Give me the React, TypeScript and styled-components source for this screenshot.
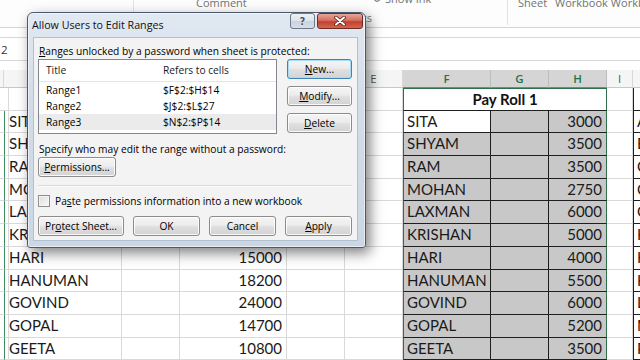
import React from "react";
import styled, { createGlobalStyle } from "styled-components";

const GlobalStyle = createGlobalStyle`
  html, body {
    margin: 0;
    padding: 0;
    background: #ffffff;
  }
  body {
    width: 640px;
    height: 360px;
    overflow: hidden;
    font-family: "Open Sans", "Noto Sans", sans-serif;
  }
`;

const ROW_H = 22.7;
const COLS = "4px 118px 58px 107px 58px 58px 88px 58px 58px 26px 80px";
const EDGE = "#2f6f4b";
const DARK = "#1e1e1e";
const GRID = "#d9d9d9";

const Page = styled.div`
  position: relative;
  width: 640px;
  height: 360px;
  overflow: hidden;
  background: #fff;
`;

/* ---------- ribbon ---------- */

const Ribbon = styled.div`
  display: flex;
  height: 27px;
  border-bottom: 1px solid #d5d5d5;
  background: #fdfdfd;
  overflow: hidden;
`;

const RibbonGroup = styled.div<{ $w?: number }>`
  box-sizing: border-box;
  width: ${(p) => (p.$w ? `${p.$w}px` : "auto")};
  flex: ${(p) => (p.$w ? "none" : 1)};
  height: 25px;
  display: flex;
  flex-direction: column;
  justify-content: space-between;
  border-right: ${(p) => (p.$w ? "1px solid #e3e3e3" : "none")};
`;

const RibbonItems = styled.div<{ $cols?: string }>`
  display: grid;
  grid-template-columns: ${(p) => p.$cols || "auto"};
  justify-content: start;
  align-items: start;
`;

const RibbonText = styled.span<{ $lift?: number; $gap?: number }>`
  display: inline-flex;
  align-items: center;
  gap: 3px;
  margin-top: ${(p) => -(p.$lift ?? 4)}px;
  margin-left: ${(p) => p.$gap ?? 0}px;
  font-size: 11px;
  line-height: 14px;
  color: #727272;
  white-space: nowrap;
`;

const GroupFooter = styled.div<{ $right: number }>`
  text-align: right;
  padding-right: ${(p) => p.$right}px;
  font-size: 11px;
  line-height: 14px;
  color: #7a7a7a;
  white-space: nowrap;
`;

const FormulaBar = styled.div`
  margin-top: 9px;
  height: 22px;
  border-top: 1px solid #d8d8d8;
  border-bottom: 1px solid #d8d8d8;
  display: flex;
  align-items: center;
`;

const NameBox = styled.span`
  padding-left: 1px;
  font-size: 11.5px;
  color: #333;
`;

/* ---------- sheet ---------- */

const Sheet = styled.div`
  display: grid;
  grid-template-columns: ${COLS};
  grid-template-rows: 18px repeat(12, ${ROW_H}px);
  margin-top: 9px;
`;

const ColHead = styled.div<{ $sel?: boolean }>`
  box-sizing: border-box;
  display: flex;
  align-items: center;
  justify-content: center;
  background: ${(p) => (p.$sel ? "#d5d5d5" : "#f5f5f5")};
  border-right: 1px solid ${(p) => (p.$sel ? "#bcbcbc" : "#d8d8d8")};
  border-bottom: 1px solid ${(p) => (p.$sel ? "#6f8f7c" : "#c8c8c8")};
  color: ${(p) => (p.$sel ? "#217346" : "#555")};
  font-size: 11.5px;
  font-weight: ${(p) => (p.$sel ? 600 : 400)};
`;

const GridCell = styled.div<{ $right?: boolean; $edge?: boolean }>`
  box-sizing: border-box;
  border-right: 1px solid ${GRID};
  border-bottom: 1px solid ${GRID};
  border-left: ${(p) => (p.$edge ? `1px solid #3c8a5d` : "none")};
  padding: 0 4px;
  font-family: Lato, "Open Sans", sans-serif;
  font-size: 15px;
  line-height: ${ROW_H - 1}px;
  color: #1a1a1a;
  text-align: ${(p) => (p.$right ? "right" : "left")};
  white-space: nowrap;
  overflow: hidden;
`;

const PayCell = styled.div<{ $pos: "first" | "mid" | "last"; $active?: boolean }>`
  box-sizing: border-box;
  background: ${(p) => (p.$active ? "#ffffff" : "#c8c8c8")};
  border-right: 1px solid ${(p) => (p.$pos === "last" ? EDGE : DARK)};
  border-bottom: 1px solid ${DARK};
  border-left: ${(p) => (p.$pos === "first" ? `1px solid ${EDGE}` : "none")};
  padding: 0 4px 0 3px;
  font-family: Lato, "Open Sans", sans-serif;
  font-size: 15px;
  line-height: ${ROW_H - 1}px;
  color: #1a1a1a;
  text-align: ${(p) => (p.$pos === "last" ? "right" : "left")};
  white-space: nowrap;
  overflow: hidden;
`;

const TitleCell = styled.div`
  grid-column: span 3;
  box-sizing: border-box;
  background: #fff;
  border: 1px solid ${EDGE};
  border-bottom-color: ${DARK};
  font-family: Lato, "Open Sans", sans-serif;
  font-size: 15px;
  font-weight: 700;
  line-height: ${ROW_H - 2}px;
  color: #111;
  text-align: center;
`;

const JCell = styled.div`
  box-sizing: border-box;
  border-left: 1px solid ${DARK};
  border-bottom: 1px solid ${DARK};
  padding-left: 3px;
  font-family: Lato, "Open Sans", sans-serif;
  font-size: 15px;
  line-height: ${ROW_H - 1}px;
  color: #1a1a1a;
  white-space: nowrap;
  overflow: hidden;
`;

/* ---------- dialog ---------- */

const Dialog = styled.div`
  position: absolute;
  left: 27px;
  top: 12px;
  width: 339px;
  height: 236px;
  box-sizing: border-box;
  display: flex;
  flex-direction: column;
  border: 1px solid #4b596c;
  border-radius: 6px 6px 3px 3px;
  background: linear-gradient(#e1e9f2, #d3dde9 35%, #cbd7e4);
  box-shadow: 4px 5px 13px rgba(0, 0, 0, 0.5),
    inset 0 0 0 1px rgba(255, 255, 255, 0.55);
  font-family: "Open Sans", "Noto Sans", sans-serif;
  font-size: 10.2px;
  color: #000;
`;

const TitleBar = styled.div`
  height: 24px;
  display: flex;
  align-items: flex-start;
  padding-left: 4px;
`;

const TitleText = styled.div`
  flex: 1;
  align-self: center;
  font-size: 10.7px;
  color: #111;
`;

const Caption = styled.div`
  display: flex;
  gap: 2px;
  margin-right: 2px;
`;

const HelpButton = styled.div`
  box-sizing: border-box;
  width: 25px;
  height: 16px;
  display: flex;
  align-items: center;
  justify-content: center;
  border: 1px solid #6c7a8b;
  border-radius: 3px;
  background: linear-gradient(#eef2f6, #dbe3ec 50%, #c9d4df 51%, #d6dee8);
  font-family: "DejaVu Sans", sans-serif;
  font-weight: 700;
  font-size: 10px;
  color: #4a5563;
  text-shadow: 0 0 1px #fff, 0 0 1px #fff;
`;

const CloseButton = styled.div`
  box-sizing: border-box;
  width: 46px;
  height: 16px;
  display: flex;
  align-items: center;
  justify-content: center;
  border: 1px solid #6e2c24;
  border-radius: 3px;
  background: linear-gradient(#e4a79c, #d6705f 45%, #c2412f 55%, #d2654f);
`;

const Panel = styled.div`
  flex: 1;
  margin: 0 7px 6px 5px;
  border: 1px solid #b3c0cf;
  background: #f3f3f3;
  padding: 5px 5px 0 4px;
  display: flex;
  flex-direction: column;
`;

const Label = styled.div<{ $top?: number }>`
  height: 16px;
  line-height: 16px;
  margin-top: ${(p) => p.$top ?? 0}px;
  padding-left: 1px;
  white-space: nowrap;
`;

const Key = styled.span`
  text-decoration: underline;
  text-underline-offset: 1px;
`;

const ListArea = styled.div`
  display: flex;
  gap: 10px;
`;

const ListBox = styled.div`
  box-sizing: border-box;
  width: 239px;
  height: 75px;
  border: 1px solid #828790;
  background: #fff;
`;

const ListRow = styled.div<{ $head?: boolean; $selected?: boolean }>`
  display: grid;
  grid-template-columns: 117px 1fr;
  height: ${(p) => (p.$head ? 21 : 16)}px;
  line-height: ${(p) => (p.$head ? 21 : 16)}px;
  border-bottom: ${(p) => (p.$head ? "1px solid #e5e5e5" : "none")};
  background: ${(p) => (p.$selected ? "#ebebeb" : "transparent")};
  color: ${(p) => (p.$head ? "#1b1b1b" : "#000")};
  & > span {
    padding-left: 7px;
    white-space: nowrap;
  }
`;

const SideButtons = styled.div`
  display: flex;
  flex-direction: column;
  gap: 7px;
`;

const Button = styled.button<{ $w: number; $focus?: boolean }>`
  box-sizing: border-box;
  width: ${(p) => p.$w}px;
  height: 20px;
  padding: 0;
  margin: 0;
  display: flex;
  align-items: center;
  justify-content: center;
  font: inherit;
  color: #000;
  border: 1px solid ${(p) => (p.$focus ? "#3d85b8" : "#8c8c8c")};
  border-radius: 3px;
  background: linear-gradient(#f5f5f5, #ececec 45%, #dfdfdf 55%, #d3d3d3);
  box-shadow: inset 0 0 0 1px
    ${(p) => (p.$focus ? "#a9dcf5" : "rgba(255, 255, 255, 0.85)")};
`;

const Separator = styled.div`
  margin-top: 8px;
  height: 1px;
  background: #dadada;
  border-bottom: 1px solid #fbfbfb;
`;

const CheckRow = styled.label`
  margin-top: 6px;
  height: 16px;
  display: flex;
  align-items: center;
  gap: 5px;
  white-space: nowrap;
`;

const CheckBox = styled.span`
  box-sizing: border-box;
  width: 12px;
  height: 12px;
  border: 1px solid #8e8f8f;
  background: linear-gradient(135deg, #dcdcdc, #fafafa);
  box-shadow: inset 0 0 0 1px #f4f4f4;
`;

const ButtonRow = styled.div`
  margin-top: 7px;
  display: flex;
  justify-content: space-between;
`;

/* ---------- data ---------- */

const columns = ["", "A", "B", "C", "D", "E", "F", "G", "H", "I", "J"];
const selected = new Set(["F", "G", "H"]);

const leftTable = [
  ["SITA", "12000"],
  ["SHYAM", "14000"],
  ["RAM", "14000"],
  ["MOHAN", "11000"],
  ["LAXMAN", "24000"],
  ["KRISHAN", "20000"],
  ["HARI", "15000"],
  ["HANUMAN", "18200"],
  ["GOVIND", "24000"],
  ["GOPAL", "14700"],
  ["GEETA", "10800"],
];

const payRoll = [
  ["SITA", "3000"],
  ["SHYAM", "3500"],
  ["RAM", "3500"],
  ["MOHAN", "2750"],
  ["LAXMAN", "6000"],
  ["KRISHAN", "5000"],
  ["HARI", "4000"],
  ["HANUMAN", "5500"],
  ["GOVIND", "6000"],
  ["GOPAL", "5200"],
  ["GEETA", "3500"],
];

const nextTable = [
  "AMIT",
  "BHARAT",
  "CHETAN",
  "CHANDU",
  "CHARU",
  "KAMAL",
  "KAPIL",
  "KARAN",
  "LALIT",
  "MOHIT",
  "PANKAJ",
];

const ranges = [
  ["Range1", "$F$2:$H$14"],
  ["Range2", "$J$2:$L$27"],
  ["Range3", "$N$2:$P$14"],
];

function InkIcon() {
  return (
    <svg width="9" height="7" viewBox="0 0 9 7">
      <path
        d="M1 0 C1 4 3 6 5 5 C7 4 8 2 8 0"
        fill="none"
        stroke="#7a7a7a"
        strokeWidth="1.2"
      />
    </svg>
  );
}

function CloseGlyph() {
  return (
    <svg width="12" height="10" viewBox="0 0 12 10">
      <path
        d="M2 1.5 L10 8.5 M10 1.5 L2 8.5"
        stroke="#5a1f18"
        strokeWidth="3.6"
        strokeLinecap="round"
      />
      <path
        d="M2 1.5 L10 8.5 M10 1.5 L2 8.5"
        stroke="#ffffff"
        strokeWidth="2"
        strokeLinecap="round"
      />
    </svg>
  );
}

function EditRangesDialog() {
  return (
    <Dialog>
      <TitleBar>
        <TitleText>Allow Users to Edit Ranges</TitleText>
        <Caption>
          <HelpButton>?</HelpButton>
          <CloseButton>
            <CloseGlyph />
          </CloseButton>
        </Caption>
      </TitleBar>
      <Panel>
        <Label>
          <Key>R</Key>anges unlocked by a password when sheet is protected:
        </Label>
        <ListArea>
          <ListBox>
            <ListRow $head>
              <span>Title</span>
              <span>Refers to cells</span>
            </ListRow>
            {ranges.map(([title, ref], idx) => (
              <ListRow key={title} $selected={idx === 2}>
                <span>{title}</span>
                <span>{ref}</span>
              </ListRow>
            ))}
          </ListBox>
          <SideButtons>
            <Button $w={65} $focus>
              <span>
                <Key>N</Key>ew...
              </span>
            </Button>
            <Button $w={65}>
              <span>
                <Key>M</Key>odify...
              </span>
            </Button>
            <Button $w={65}>
              <span>
                <Key>D</Key>elete
              </span>
            </Button>
          </SideButtons>
        </ListArea>
        <Label $top={7}>Specify who may edit the range without a password:</Label>
        <Button $w={78}>
          <span>
            <Key>P</Key>ermissions...
          </span>
        </Button>
        <Separator />
        <CheckRow>
          <CheckBox />
          <span>
            Pa<Key>s</Key>te permissions information into a new workbook
          </span>
        </CheckRow>
        <ButtonRow>
          <Button $w={86}>
            <span>
              Pr<Key>o</Key>tect Sheet...
            </span>
          </Button>
          <Button $w={67}>OK</Button>
          <Button $w={67}>Cancel</Button>
          <Button $w={67}>
            <span>
              <Key>A</Key>pply
            </span>
          </Button>
        </ButtonRow>
      </Panel>
    </Dialog>
  );
}

export default function App() {
  return (
    <Page>
      <GlobalStyle />
      <Ribbon>
        <RibbonGroup $w={134} />
        <RibbonGroup $w={374}>
          <RibbonItems $cols="62px 177px 1fr">
            <span />
            <RibbonText>Comment</RibbonText>
            <RibbonText $lift={8}>
              <InkIcon />
              Show Ink
            </RibbonText>
          </RibbonItems>
          <GroupFooter $right={135}>Comments</GroupFooter>
        </RibbonGroup>
        <RibbonGroup>
          <RibbonItems $cols="auto auto auto">
            <RibbonText $gap={10}>Sheet</RibbonText>
            <RibbonText $gap={8}>Workbook</RibbonText>
            <RibbonText $gap={3}>Workbook</RibbonText>
          </RibbonItems>
        </RibbonGroup>
      </Ribbon>

      <FormulaBar>
        <NameBox>2</NameBox>
      </FormulaBar>

      <Sheet>
        {columns.map((c, i) => (
          <ColHead key={`h${i}`} $sel={selected.has(c)}>
            {c}
          </ColHead>
        ))}

        <GridCell />
        <GridCell />
        <GridCell />
        <GridCell />
        <GridCell />
        <GridCell />
        <TitleCell>Pay Roll 1</TitleCell>
        <GridCell />
        <JCell />

        {payRoll.map(([name, pay], i) => (
          <React.Fragment key={name + i}>
            <GridCell />
            <GridCell $edge>{leftTable[i][0]}</GridCell>
            <GridCell />
            <GridCell $right>{leftTable[i][1]}</GridCell>
            <GridCell />
            <GridCell />
            <PayCell $pos="first" $active={i === 0}>
              {name}
            </PayCell>
            <PayCell $pos="mid" />
            <PayCell $pos="last">{pay}</PayCell>
            <GridCell />
            <JCell>{nextTable[i]}</JCell>
          </React.Fragment>
        ))}
      </Sheet>

      <EditRangesDialog />
    </Page>
  );
}
